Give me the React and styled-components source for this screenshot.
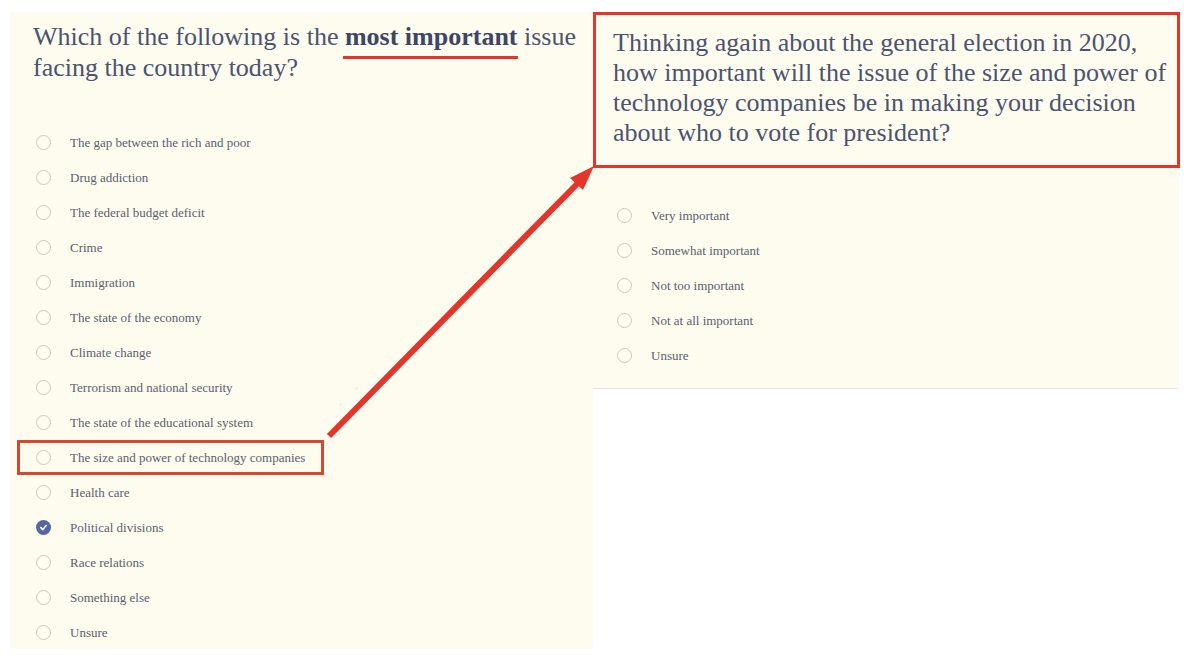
import React from 'react';
import styled, { createGlobalStyle } from 'styled-components';

const GlobalStyle = createGlobalStyle`
  body {
    margin: 0;
    background: #ffffff;
    font-family: "Liberation Serif", "Times New Roman", serif;
  }
`;

const Page = styled.div`
  position: relative;
  width: 1200px;
  height: 661px;
  display: flex;
  align-items: flex-start;
  padding: 12px 0 0 10px;
  box-sizing: border-box;
  overflow: hidden;
`;

const Panel = styled.div`
  position: relative;
  background: #fefcef;
  box-sizing: border-box;
  width: ${({ w }) => w}px;
  height: ${({ h }) => h}px;
  display: flex;
  flex-direction: column;
  border-bottom: ${({ rule }) => (rule ? '1px solid #e9e7dc' : 'none')};
`;

const Question = styled.h1`
  margin: 0;
  font-weight: normal;
  font-size: 26px;
  line-height: 31px;
  color: #4b5371;
  padding: 9px 4px 0 23px;
`;

const Emph = styled.strong`
  position: relative;
  font-weight: bold;
  color: #3d4666;
  &::after {
    content: '';
    position: absolute;
    left: -2px;
    right: 0;
    bottom: -8px;
    height: 3px;
    background: #e5352b;
  }
`;

const Framed = styled.div`
  position: relative;
  padding: 16px 6px 20px 20px;
  font-size: 26px;
  line-height: 30px;
  color: #4b5371;
  &::after {
    content: '';
    position: absolute;
    inset: 0 -1px 0 0;
    border: 3px solid #e5352b;
  }
`;

const List = styled.ul`
  list-style: none;
  margin: ${({ top }) => top}px 0 0;
  padding: 0;
`;

const Row = styled.li`
  position: relative;
  height: 35px;
  display: flex;
  align-items: center;
  gap: 19px;
  padding-left: ${({ inset }) => inset}px;
  font-size: 13px;
  color: #5a5f6e;
  ${({ marked }) =>
    marked &&
    `
    &::after {
      content: '';
      position: absolute;
      left: 7px;
      top: 0;
      width: 307px;
      height: 35px;
      box-sizing: border-box;
      border: 3px solid #d4492d;
    }
  `}
`;

const Radio = styled.span`
  width: 15px;
  height: 15px;
  box-sizing: border-box;
  border-radius: 50%;
  flex: none;
  display: flex;
  align-items: center;
  justify-content: center;
  border: ${({ checked }) => (checked ? 'none' : '1.5px solid #cbc9c2')};
  background: ${({ checked }) => (checked ? '#55679c' : 'transparent')};
`;

const Arrow = styled.svg`
  position: absolute;
  left: 0;
  top: 0;
  pointer-events: none;
`;

const issues = [
  'The gap between the rich and poor',
  'Drug addiction',
  'The federal budget deficit',
  'Crime',
  'Immigration',
  'The state of the economy',
  'Climate change',
  'Terrorism and national security',
  'The state of the educational system',
  'The size and power of technology companies',
  'Health care',
  'Political divisions',
  'Race relations',
  'Something else',
  'Unsure',
];

const levels = [
  'Very important',
  'Somewhat important',
  'Not too important',
  'Not at all important',
  'Unsure',
];

function Check() {
  return (
    <svg width="9" height="9" viewBox="0 0 10 10">
      <path d="M2 5.2 L4.2 7.3 L8 2.8" fill="none" stroke="#fff" strokeWidth="1.8" strokeLinecap="round" strokeLinejoin="round" />
    </svg>
  );
}

export default function App() {
  return (
    <>
      <GlobalStyle />
      <Page>
        <Panel w={583} h={637}>
          <Question>
            Which of the following is the <Emph>most important</Emph> issue facing the country today?
          </Question>
          <List top={42}>
            {issues.map((t, i) => (
              <Row key={t} inset={26} marked={i === 9}>
                <Radio checked={i === 11}>{i === 11 && <Check />}</Radio>
                {t}
              </Row>
            ))}
          </List>
        </Panel>
        <Panel w={586} h={377} rule>
          <Framed>
            Thinking again about the general election in 2020, how important will the issue of the size and power of technology companies be in making your decision about who to vote for president?
          </Framed>
          <List top={30}>
            {levels.map((t) => (
              <Row key={t} inset={24}>
                <Radio />
                {t}
              </Row>
            ))}
          </List>
        </Panel>
        <Arrow width="1200" height="661">
          <line x1="329" y1="436" x2="580" y2="181" stroke="#e5352b" strokeWidth="6" />
          <polygon points="594,166 570,178 583,190" fill="#e5352b" />
        </Arrow>
      </Page>
    </>
  );
}
